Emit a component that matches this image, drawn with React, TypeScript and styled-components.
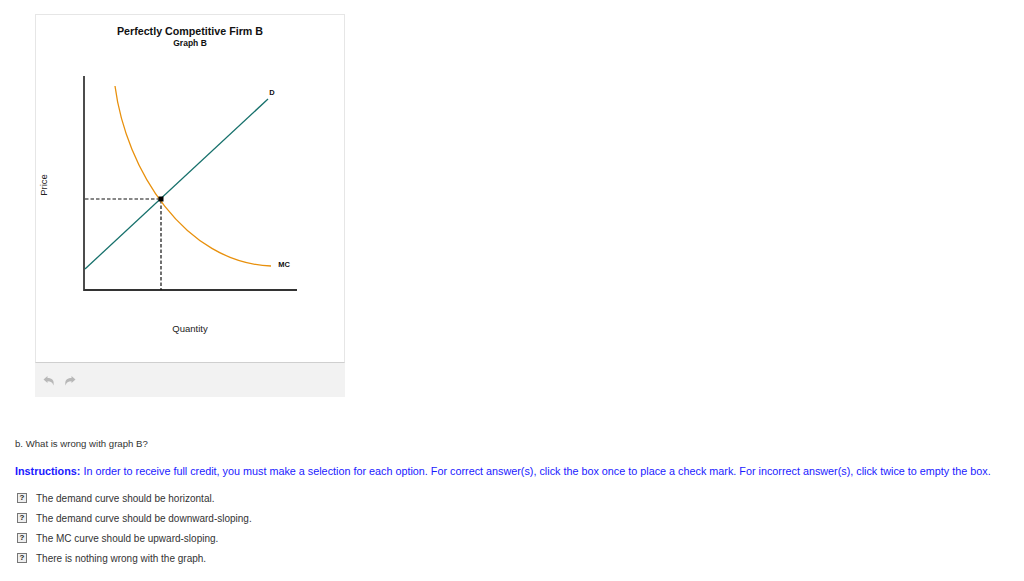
import React from "react";
import styled, { createGlobalStyle } from "styled-components";

const Global = createGlobalStyle`
  html, body { margin: 0; padding: 0; background: #fff; }
  body { font-family: "Liberation Sans", Arial, sans-serif; color: #333; }
`;

const Page = styled.div`
  padding: 14px 0 0 15px;
  display: flex;
  flex-direction: column;
`;

const Panel = styled.div`
  margin-left: 20px;
  width: 310px;
  display: flex;
  flex-direction: column;
`;

const ChartArea = styled.div`
  height: 349px;
  border: 1px solid #e6e6e6;
  border-bottom: 1px solid #cfcfcf;
  background: #fff;
  box-sizing: border-box;
`;

const Toolbar = styled.div`
  height: 34px;
  background: #f2f2f2;
  display: flex;
  align-items: center;
  gap: 9px;
  padding-left: 8px;
`;

const Question = styled.p`
  margin: 41px 0 0 0;
  font-size: 9.6px;
  color: #333;
`;

const Instructions = styled.p`
  margin: 16px 0 0 0;
  font-size: 10.8px;
  color: #1a1aff;
  white-space: nowrap;
  b { font-weight: bold; }
`;

const Options = styled.ul`
  list-style: none;
  margin: 15px 0 0 0;
  padding: 0;
  display: flex;
  flex-direction: column;
  gap: 8px;
`;

const Option = styled.li`
  display: flex;
  align-items: center;
  gap: 9px;
  font-size: 10px;
  color: #333;
  height: 12px;
`;

const Box = styled.span`
  width: 8px;
  height: 8px;
  margin-left: 2px;
  border: 1px solid #777;
  background: #eee;
  font-size: 8px;
  font-weight: bold;
  line-height: 8px;
  text-align: center;
  color: #222;
  display: inline-block;
`;

const UndoIcon = ({ flip }: { flip?: boolean }) => (
  <svg width="12" height="11" viewBox="0 0 12 11" style={flip ? { transform: "scaleX(-1)" } : undefined}>
    <path d="M0.5 4.5 L4.5 1 L4.5 3 C9 3 11.5 5 10.5 10.5 C9.5 7.5 8 6.3 4.5 6.3 L4.5 8 Z" fill="#b8b8b8" />
  </svg>
);

const options = [
  "The demand curve should be horizontal.",
  "The demand curve should be downward-sloping.",
  "The MC curve should be upward-sloping.",
  "There is nothing wrong with the graph.",
];

const FONT = "Liberation Sans, Arial, sans-serif";

export default function App() {
  const ox = 36, oy = 15;
  const p = (x: number, y: number) => `${x - ox},${y - oy}`;
  return (
    <>
      <Global />
      <Page>
        <Panel>
          <ChartArea>
            <svg width="308" height="347" viewBox="0 0 308 347" style={{ display: "block" }}>
              <text x={190 - ox} y={35 - oy} textAnchor="middle" fontSize="10.7" fontWeight="bold" fill="#111" fontFamily={FONT}>Perfectly Competitive Firm B</text>
              <text x={190 - ox} y={46 - oy} textAnchor="middle" fontSize="8.5" fontWeight="bold" fill="#111" fontFamily={FONT}>Graph B</text>
              <text transform={`translate(${47 - ox},${185 - oy}) rotate(-90)`} textAnchor="middle" fontSize="9.5" fill="#222" fontFamily={FONT}>Price</text>
              <text x={190 - ox} y={332 - oy} textAnchor="middle" fontSize="9.5" fill="#222" fontFamily={FONT}>Quantity</text>
              <line x1={84 - ox} y1={76 - oy} x2={84 - ox} y2={291 - oy} stroke="#111" strokeWidth="1.5" />
              <line x1={84 - ox} y1={290 - oy} x2={297 - ox} y2={290 - oy} stroke="#333" strokeWidth="2" />
              <polyline points={`${p(85, 199)} ${p(161, 199)} ${p(161, 290)}`} fill="none" stroke="#111" strokeWidth="1.2" strokeDasharray="3.5 2" />
              <line x1={85 - ox} y1={269 - oy} x2={268 - ox} y2={99 - oy} stroke="#16706b" strokeWidth="1.3" />
              <path d={`M${p(115, 86)} C${p(126, 170)} ${p(185, 263)} ${p(271, 266)}`} fill="none" stroke="#e8900c" strokeWidth="1.3" />
              <rect x={158.5 - ox} y={196.5 - oy} width="5" height="5" fill="#000" />
              <text x={272 - ox} y={95 - oy} textAnchor="middle" fontSize="7.5" fontWeight="bold" fill="#111" fontFamily={FONT}>D</text>
              <text x={284 - ox} y={267 - oy} textAnchor="middle" fontSize="7.5" fontWeight="bold" fill="#111" fontFamily={FONT}>MC</text>
            </svg>
          </ChartArea>
          <Toolbar>
            <UndoIcon />
            <UndoIcon flip />
          </Toolbar>
        </Panel>
        <Question>b. What is wrong with graph B?</Question>
        <Instructions>
          <b>Instructions:</b> In order to receive full credit, you must make a selection for each option. For correct answer(s), click the box once to place a check mark. For incorrect answer(s), click twice to empty the box.
        </Instructions>
        <Options>
          {options.map((o) => (
            <Option key={o}>
              <Box>?</Box>
              <span>{o}</span>
            </Option>
          ))}
        </Options>
      </Page>
    </>
  );
}
